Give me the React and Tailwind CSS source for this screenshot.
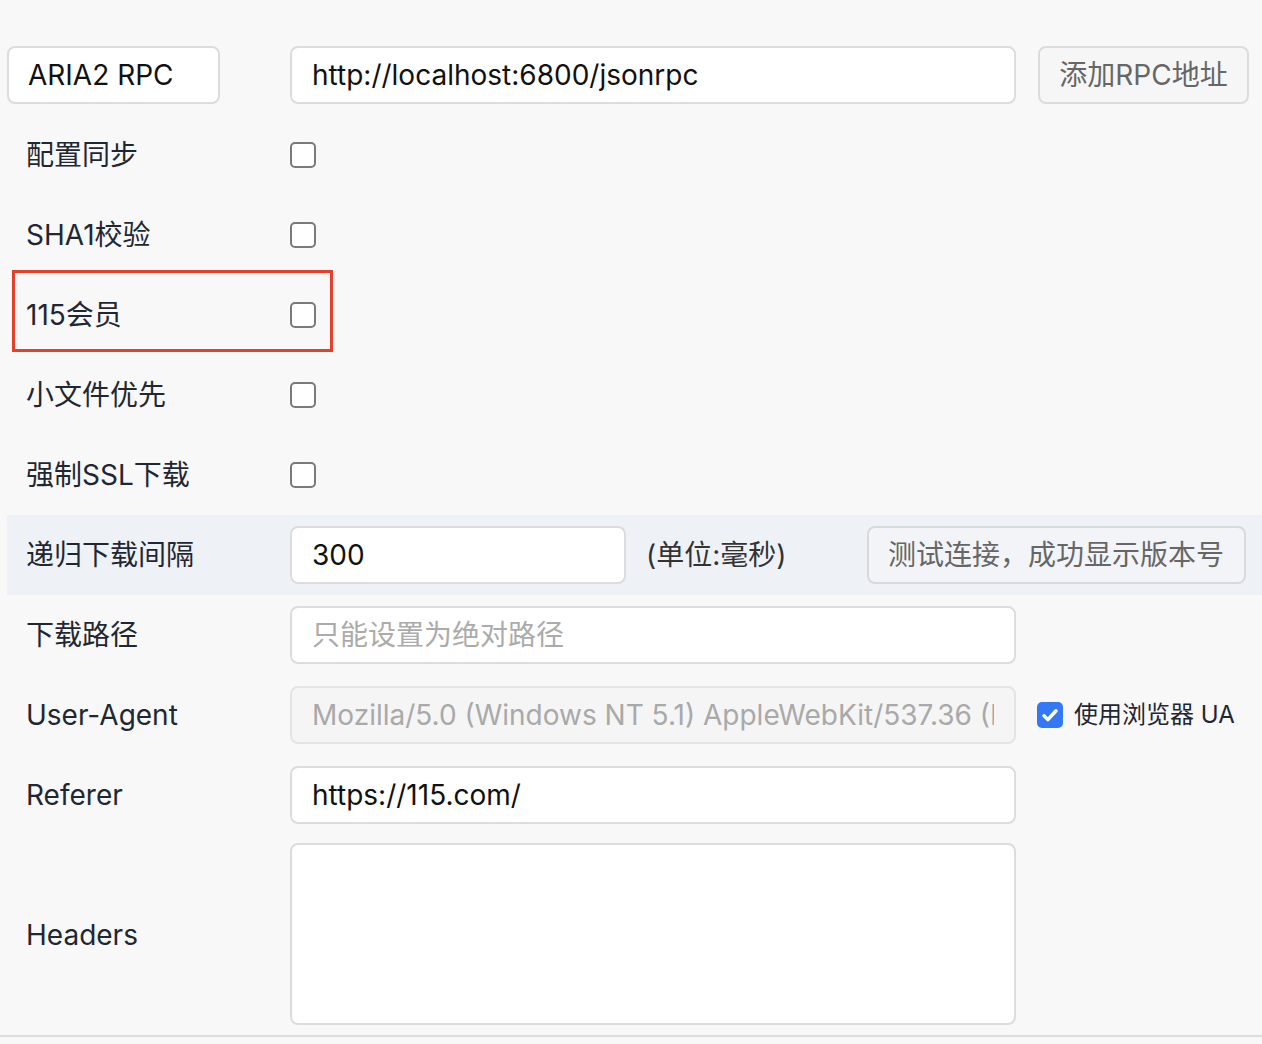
import React from "react";

const FONT = { fontFamily: '"Inter", "Noto Sans CJK SC", sans-serif' };

function Checkbox({ checked }) {
  if (checked) {
    return (
      <span className="flex h-[26px] w-[26px] shrink-0 items-center justify-center rounded-[5px] bg-[#3478f6]">
        <svg width="20" height="20" viewBox="0 0 16 16" fill="none">
          <path d="M3.2 8.6l3.1 3.1L12.8 4.6" stroke="white" strokeWidth="2.8" strokeLinecap="round" strokeLinejoin="round" />
        </svg>
      </span>
    );
  }
  return <span className="block h-[26px] w-[26px] shrink-0 rounded-[5px] border-2 border-[#7a7a7a] bg-white" />;
}

function Label({ children }) {
  return <div className="w-[283px] shrink-0 pl-[19px] text-[28px] text-[#1f2733]">{children}</div>;
}

const inputCls =
  "h-[58px] rounded-[8px] border-2 border-[#dcdcdc] bg-white px-[20px] text-[28px] text-[#111] outline-none placeholder:text-[#ababab]";

function CheckRow({ label, boxed }) {
  return (
    <div className="relative flex h-[80px] items-center">
      <Label>{label}</Label>
      <Checkbox />
      {boxed && (
        <div className="pointer-events-none absolute left-[5px] top-[-5px] h-[82px] w-[321px] border-[3px] border-[#e4402b]" />
      )}
    </div>
  );
}

export default function App() {
  return (
    <div className="min-h-screen bg-[#f8f8f8]" style={FONT}>
      <div className="border-b-2 border-[#dedede] pl-[7px] pt-[35px]">
        <div className="flex h-[80px] items-center">
          <div className="flex h-[58px] w-[213px] shrink-0 items-center rounded-[8px] border-2 border-[#dcdcdc] bg-white px-[19px] text-[28px] text-[#111]">
            ARIA2 RPC
          </div>
          <input
            readOnly
            value="http://localhost:6800/jsonrpc"
            className={inputCls + " ml-[70px] w-[726px]"}
            style={FONT}
          />
          <button
            className="ml-[22px] h-[58px] w-[211px] rounded-[8px] border-2 border-[#dcdcdc] bg-[#f6f6f6] px-[18px] text-[28px] text-[#666]"
            style={FONT}
          >
            添加RPC地址
          </button>
        </div>

        <CheckRow label="配置同步" />
        <CheckRow label="SHA1校验" />
        <CheckRow label="115会员" boxed />
        <CheckRow label="小文件优先" />
        <CheckRow label="强制SSL下载" />

        <div className="flex h-[80px] items-center bg-[#eef2f7]">
          <Label>递归下载间隔</Label>
          <input readOnly value="300" className={inputCls + " w-[336px]"} style={FONT} />
          <span className="ml-[20px] text-[28px] text-[#333]">(单位:毫秒)</span>
          <button
            className="ml-[80px] h-[58px] w-[379px] rounded-[8px] border-2 border-[#d6d9de] bg-[#f2f4f7] px-[18px] text-[28px] text-[#666]"
            style={FONT}
          >
            测试连接，成功显示版本号
          </button>
        </div>

        <div className="flex h-[80px] items-center">
          <Label>下载路径</Label>
          <input placeholder="只能设置为绝对路径" className={inputCls + " w-[726px]"} style={FONT} />
        </div>

        <div className="flex h-[80px] items-center">
          <Label>User-Agent</Label>
          <input
            disabled
            value="Mozilla/5.0 (Windows NT 5.1) AppleWebKit/537.36 (KHTML, like Gecko) Chrome/41.0.2228.0 Safari/537.36"
            readOnly
            className="h-[58px] w-[726px] rounded-[8px] border-2 border-[#e4e4e4] bg-[#f5f5f5] px-[20px] text-[28px] text-[#a9a9a9] outline-none"
            style={FONT}
          />
          <label className="ml-[21px] flex items-center gap-[11px] text-[24px] text-[#1f2733]">
            <Checkbox checked />
            <span>使用浏览器 UA</span>
          </label>
        </div>

        <div className="flex h-[80px] items-center">
          <Label>Referer</Label>
          <input readOnly value="https://115.com/" className={inputCls + " w-[726px]"} style={FONT} />
        </div>

        <div className="flex h-[200px] items-center">
          <Label>Headers</Label>
          <textarea
            className="mb-[2px] h-[182px] w-[726px] resize-none rounded-[8px] border-2 border-[#dcdcdc] bg-white px-[20px] py-[10px] text-[28px] outline-none"
            style={FONT}
          />
        </div>
      </div>
    </div>
  );
}
